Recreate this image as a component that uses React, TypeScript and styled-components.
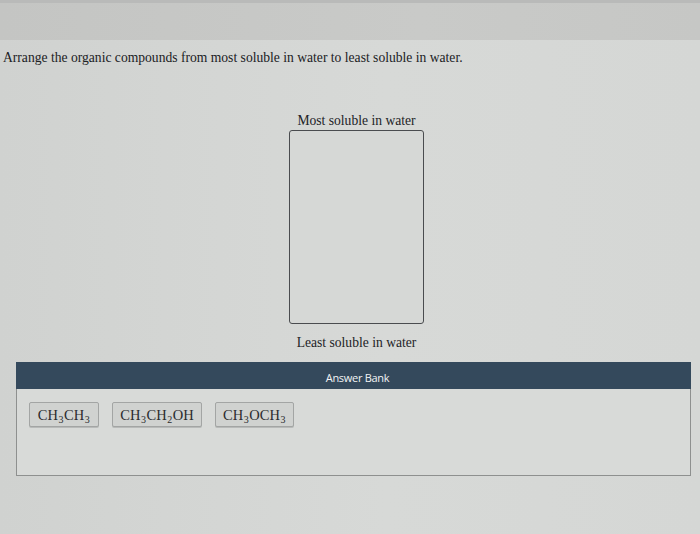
import React from "react";
import styled, { createGlobalStyle } from "styled-components";

const Global = createGlobalStyle`
  html, body { margin: 0; padding: 0; }
  body {
    width: 700px;
    height: 534px;
    overflow: hidden;
    background: #d4d6d4;
    font-family: "Liberation Serif", "Times New Roman", serif;
    color: #1e1f22;
  }
`;

const Page = styled.div`
  display: flex;
  flex-direction: column;
  width: 700px;
  height: 534px;
  background: linear-gradient(90deg, #d0d2d0 0%, #d7d9d7 55%, #d5d7d5 100%);
`;

const TopBand = styled.div`
  height: 37px;
  border-top: 3px solid #b9bab9;
  background: linear-gradient(90deg, #c4c5c3 0%, #c9cac8 60%, #c6c7c5 100%);
`;

const Prompt = styled.p`
  margin: 10px 0 0 3px;
  font-size: 13.6px;
  line-height: 15px;
  color: #202124;
`;

const SortColumn = styled.div`
  display: flex;
  flex-direction: column;
  align-items: center;
  margin: 48px 0 0 289px;
  width: 135px;
`;

const ColumnLabel = styled.div`
  font-size: 13.6px;
  line-height: 15px;
  white-space: nowrap;
  color: #222326;
`;

const DropZone = styled.div<{ $h: number }>`
  box-sizing: border-box;
  width: 135px;
  height: ${(p) => p.$h}px;
  margin: 2px 0 11px;
  border: 1.5px solid #4a4c4f;
  border-radius: 3px;
  background: #d6d8d6;
`;

const Bank = styled.section`
  margin: 12px 9px 0 16px;
  display: flex;
  flex-direction: column;
`;

const BankHeader = styled.div`
  box-sizing: border-box;
  height: 27px;
  display: flex;
  align-items: center;
  justify-content: center;
  padding: 4px 0 0 8px;
  background: #34495c;
  color: #f2f4f5;
  font-family: "Open Sans", "Liberation Sans", sans-serif;
  font-size: 11px;
  letter-spacing: -0.3px;
`;

const BankBody = styled.div`
  box-sizing: border-box;
  height: 87px;
  display: flex;
  align-items: flex-start;
  gap: 13px;
  padding: 13px 12px;
  border: 1.5px solid #8e908f;
  border-top: none;
  background: #d8dad8;
`;

const Chip = styled.div<{ $w: number }>`
  box-sizing: border-box;
  width: ${(p) => p.$w}px;
  height: 25px;
  display: flex;
  align-items: center;
  justify-content: center;
  border: 1px solid #a3a5a4;
  border-radius: 2px;
  background: #d0d2d0;
  box-shadow: 0 1px 0 #b8bab9;
  font-size: 14.5px;
  color: #2a2b2e;
`;

const Formula = styled.span`
  display: inline-block;
  line-height: 16px;
  sub {
    font-size: 10px;
    vertical-align: -3px;
    line-height: 0;
    margin: 0 0.5px;
  }
`;

const compounds: { parts: [string, string?][]; w: number }[] = [
  { parts: [["CH", "3"], ["CH", "3"]], w: 70 },
  { parts: [["CH", "3"], ["CH", "2"], ["OH"]], w: 90 },
  { parts: [["CH", "3"], ["OCH", "3"]], w: 79 },
];

export default function App() {
  return (
    <>
      <Global />
      <Page>
        <TopBand />
        <Prompt>Arrange the organic compounds from most soluble in water to least soluble in water.</Prompt>
        <SortColumn>
          <ColumnLabel>Most soluble in water</ColumnLabel>
          <DropZone $h={194} />
          <ColumnLabel>Least soluble in water</ColumnLabel>
        </SortColumn>
        <Bank>
          <BankHeader>Answer Bank</BankHeader>
          <BankBody>
            {compounds.map((c, i) => (
              <Chip key={i} $w={c.w}>
                <Formula>
                  {c.parts.map(([t, s], j) => (
                    <React.Fragment key={j}>
                      {t}
                      {s && <sub>{s}</sub>}
                    </React.Fragment>
                  ))}
                </Formula>
              </Chip>
            ))}
          </BankBody>
        </Bank>
      </Page>
    </>
  );
}
